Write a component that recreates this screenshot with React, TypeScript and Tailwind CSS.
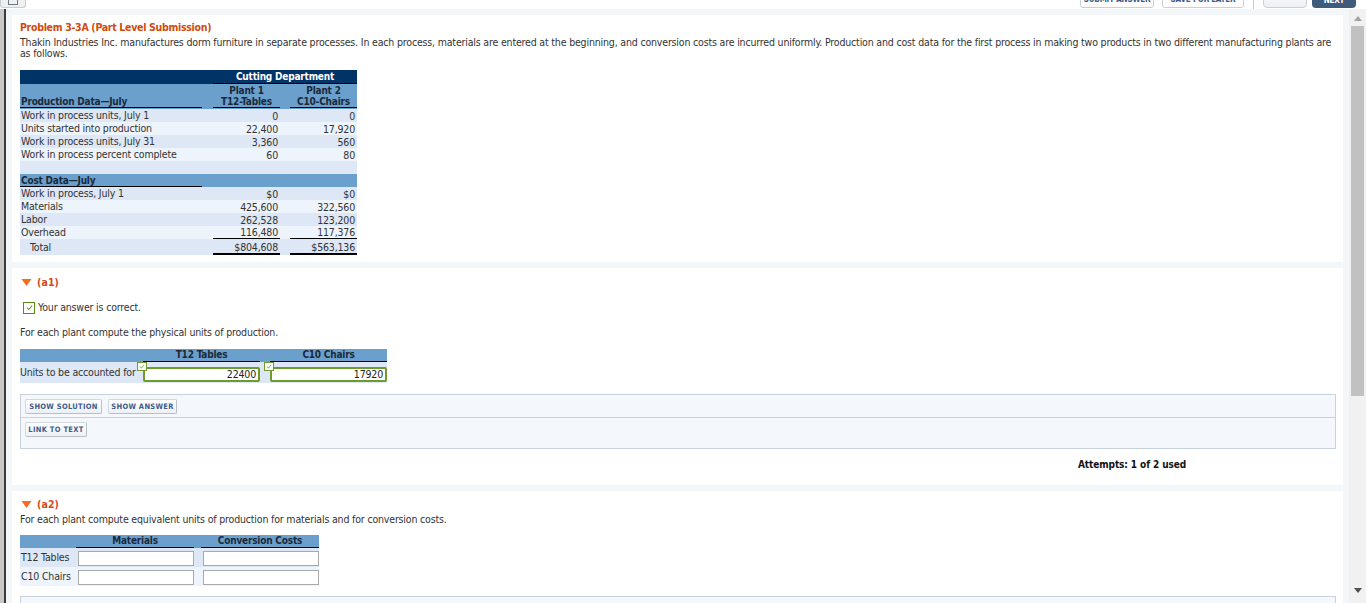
import React from "react";

const FONT = "font-['DejaVu_Sans_Condensed','DejaVu_Sans',sans-serif]";
const ROW_DARK = "bg-[#dde7f5]";
const ROW_LIGHT = "bg-[#eef4fb]";
const HEAD_BLUE = "bg-[#6b9fcc]";
const HEAD_TXT = "font-bold text-[10px] tracking-[-0.2px] text-[#1a2a3a]";

function DataRow({
  label,
  a,
  b,
  bg,
  underline,
}: {
  label: string;
  a: string;
  b: string;
  bg: string;
  underline?: boolean;
}) {
  const line = underline ? "border-b border-black" : "";
  return (
    <div className={`flex h-[13px] items-center ${bg}`}>
      <div className="w-[182px] pl-[1px]">{label}</div>
      <div className={`ml-[11px] w-[67px] pr-[2px] text-right leading-[12px] ${line}`}>{a}</div>
      <div className={`ml-[10px] w-[67px] pr-[2px] text-right leading-[12px] ${line}`}>{b}</div>
    </div>
  );
}

function Check({ className = "" }: { className?: string }) {
  return (
    <svg viewBox="0 0 10 10" className={className}>
      <path d="M2 5.2 L4.2 7.2 L8 2.8" fill="none" stroke="#5f9a1f" strokeWidth="1.2" />
    </svg>
  );
}

function GreenInput({ value }: { value: string }) {
  return (
    <div className="relative w-[117px] h-[15px]">
      <div className="absolute -left-[6px] -top-[5px] w-[10px] h-[9px] border border-[#6f9a2c] bg-white flex items-center justify-center">
        <Check className="w-[8px] h-[7px]" />
      </div>
      <div className="w-full h-full rounded-[2px] border-2 border-[#6f9a2c] bg-white text-right pr-[2px] leading-[11px] text-[#222]">
        {value}
      </div>
    </div>
  );
}

function Btn({ label, w }: { label: string; w: string }) {
  return (
    <div
      className={`${w} h-[15px] flex items-center justify-center rounded-[2px] border border-[#d3d8de] border-r-[#b9c0c8] border-b-[#b9c0c8] bg-gradient-to-b from-white to-[#edf0f3] text-[7.5px] font-bold text-[#3e5b8c] tracking-[0.3px]`}
    >
      {label}
    </div>
  );
}

function SectionHead({ label }: { label: string }) {
  return (
    <div className="flex items-center h-[13px] gap-[5px]">
      <svg viewBox="0 0 10 7" className="w-[11px] h-[7px] ml-[1px]">
        <path d="M0 0 H10 L5 7 Z" fill="#f26c22" />
      </svg>
      <span className="text-[#d2491a] font-bold text-[10.5px] tracking-[0.1px]">{label}</span>
    </div>
  );
}

export default function App() {
  return (
    <div className={`w-[1366px] h-[603px] overflow-hidden bg-white text-[10.5px] tracking-[-0.17px] text-[#333] ${FONT}`}>
      {/* top toolbar, mostly scrolled away */}
      <div className="h-[9px] flex items-end overflow-hidden relative">
        <div className="w-[26px] h-[8px] self-start border border-t-0 border-[#c9cdd2] rounded-b-[3px] bg-[#eef0f2] flex justify-center">
          <div className="w-[10px] h-[5px] border border-t-0 border-[#6a7b8e]" />
        </div>
        <div className="ml-auto flex items-start self-start h-[9px] mr-[10px]">
          <div className="-mt-[15px] w-[74px] h-[23px] border border-[#c8d0d8] rounded-[3px] bg-white flex items-end justify-center pb-[1px] text-[8px] font-bold text-[#3e5b8c]">
            SUBMIT ANSWER
          </div>
          <div className="-mt-[15px] ml-[8px] w-[82px] h-[23px] border border-[#c8d0d8] rounded-[3px] bg-white flex items-end justify-center pb-[1px] text-[8px] font-bold text-[#3e5b8c]">
            SAVE FOR LATER
          </div>
          <div className="ml-[9px] w-[1px] h-[9px] bg-[#c8ccd2]" />
          <div className="-mt-[15px] ml-[9px] w-[44px] h-[23px] border border-[#c8d0d8] rounded-[4px] bg-gradient-to-b from-white to-[#eef0f3]" />
          <div className="-mt-[15px] ml-[5px] w-[44px] h-[23px] rounded-[4px] bg-[#3f5b7c] flex items-end justify-center pb-[1px] text-[8px] font-bold text-white">
            NEXT
          </div>
        </div>
      </div>

      <div className="flex h-[594px]">
        {/* left strip */}
        <div className="w-[4px] bg-[#c8c8c8]" />
        <div className="w-[2px] bg-[#3a3a3a]" />

        {/* main content */}
        <div className="flex-1 bg-[#f4f7fa] px-[6px] pt-[6px] overflow-hidden">
          {/* Panel 1 */}
          <div className="bg-white h-[247px] pl-[8px] pt-[6px]">
            <div className="text-[#cf4a0d] font-bold text-[10.5px] leading-[13px] tracking-[-0.3px]">
              Problem 3-3A (Part Level Submission)
            </div>
            <div className="mt-[3px] leading-[11px]">
              <div className="whitespace-nowrap">
                Thakin Industries Inc. manufactures dorm furniture in separate processes. In each process, materials are entered at the beginning, and conversion costs are incurred uniformly. Production and cost data for the first process in making two products in two different manufacturing plants are
              </div>
              <div>as follows.</div>
            </div>

            {/* production/cost table */}
            <div className="mt-[11px] w-[337px]">
              <div className="flex h-[14px] bg-[#003366]">
                <div className="w-[182px]" />
                <div className="ml-[11px] w-[144px] border-b border-black text-center text-white font-bold text-[10px] tracking-[-0.2px] leading-[13px]">
                  Cutting Department
                </div>
              </div>
              <div className={`flex h-[25px] items-end pb-[1px] ${HEAD_BLUE} ${HEAD_TXT}`}>
                <div className="w-[182px] border-b border-black leading-[11px] pl-[1px]">Production Data—July</div>
                <div className="ml-[11px] w-[67px] border-b border-black text-center leading-[11px]">
                  Plant 1<br />T12-Tables
                </div>
                <div className="ml-[10px] w-[67px] border-b border-black text-center leading-[11px]">
                  Plant 2<br />C10-Chairs
                </div>
              </div>
              <DataRow label="Work in process units, July 1" a="0" b="0" bg={ROW_DARK} />
              <DataRow label="Units started into production" a="22,400" b="17,920" bg={ROW_LIGHT} />
              <DataRow label="Work in process units, July 31" a="3,360" b="560" bg={ROW_DARK} />
              <DataRow label="Work in process percent complete" a="60" b="80" bg={ROW_LIGHT} />
              <div className={`h-[13px] ${ROW_DARK}`} />
              <div className={`flex h-[13px] items-end ${HEAD_BLUE} ${HEAD_TXT}`}>
                <div className="w-[182px] border-b border-black leading-[11px] pl-[1px]">Cost Data—July</div>
              </div>
              <DataRow label="Work in process, July 1" a="$0" b="$0" bg={ROW_DARK} />
              <DataRow label="Materials" a="425,600" b="322,560" bg={ROW_LIGHT} />
              <DataRow label="Labor" a="262,528" b="123,200" bg={ROW_DARK} />
              <DataRow label="Overhead" a="116,480" b="117,376" bg={ROW_LIGHT} underline />
              <div className={`flex h-[16px] items-end ${ROW_DARK}`}>
                <div className="w-[182px] pl-[10px] pb-[2px] leading-[11px]">Total</div>
                <div className="ml-[11px] w-[67px] pr-[2px] text-right border-b-2 border-black leading-[11px]">$804,608</div>
                <div className="ml-[10px] w-[67px] pr-[2px] text-right border-b-2 border-black leading-[11px]">$563,136</div>
              </div>
            </div>
          </div>

          {/* Panel 2 */}
          <div className="bg-white mt-[6px] h-[217px] pl-[8px] pr-[7px] pt-[8px]">
            <SectionHead label="(a1)" />
            <div className="mt-[12px] flex items-center h-[13px]">
              <div className="ml-[3px] w-[12px] h-[12px] border border-[#5c8a1a] flex items-center justify-center">
                <Check className="w-[9px] h-[9px]" />
              </div>
              <span className="ml-[3px]">Your answer is correct.</span>
            </div>
            <div className="mt-[12px] leading-[13px]">For each plant compute the physical units of production.</div>

            <div className="mt-[10px] w-[367px]">
              <div className={`flex h-[13px] ${HEAD_BLUE} ${HEAD_TXT}`}>
                <div className="w-[123px]" />
                <div className="w-[117px] border-b border-black text-center leading-[12px]">T12 Tables</div>
                <div className="ml-[10px] w-[117px] border-b border-black text-center leading-[12px]">C10 Chairs</div>
              </div>
              <div className={`flex h-[21px] ${ROW_DARK}`}>
                <div className="w-[123px] pt-[4px] leading-[13px]">Units to be accounted for</div>
                <div className="pt-[5px]">
                  <GreenInput value="22400" />
                </div>
                <div className="ml-[10px] pt-[5px]">
                  <GreenInput value="17920" />
                </div>
              </div>
            </div>

            <div className="mt-[11px] border border-[#c8d2de] bg-[#f4f7fb] h-[55px]">
              <div className="flex gap-[6px] pl-[4px] pt-[4px] h-[23px] border-b border-[#c8d2de]">
                <Btn label="SHOW SOLUTION" w="w-[77px]" />
                <Btn label="SHOW ANSWER" w="w-[69px]" />
              </div>
              <div className="pl-[4px] pt-[4px]">
                <Btn label="LINK TO TEXT" w="w-[62px]" />
              </div>
            </div>

            <div className="mt-[9px] flex h-[13px]">
              <div className="ml-[1058px] font-bold text-[10px] text-[#111] leading-[13px] tracking-[-0.1px]">Attempts: 1 of 2 used</div>
            </div>
          </div>

          {/* Panel 3 */}
          <div className="bg-white mt-[6px] h-[130px] pl-[8px] pr-[7px] pt-[7px]">
            <SectionHead label="(a2)" />
            <div className="mt-[2px] leading-[13px]">
              For each plant compute equivalent units of production for materials and for conversion costs.
            </div>

            <div className="mt-[9px] w-[299px]">
              <div className={`flex h-[13px] ${HEAD_BLUE} ${HEAD_TXT}`}>
                <div className="w-[56px]" />
                <div className="w-[118px] border-b border-black text-center leading-[12px]">Materials</div>
                <div className="ml-[7px] w-[118px] border-b border-black text-center leading-[12px]">Conversion Costs</div>
              </div>
              {[
                { label: "T12 Tables", bg: ROW_DARK },
                { label: "C10 Chairs", bg: ROW_LIGHT },
              ].map((r) => (
                <div key={r.label} className={`flex h-[19px] items-end pb-[1px] ${r.bg}`}>
                  <div className="w-[56px] self-center pl-[1px] pt-[1px]">{r.label}</div>
                  <div className="ml-[2px] w-[116px] h-[15px] border border-[#a9a9a9] bg-white" />
                  <div className="ml-[9px] w-[116px] h-[15px] border border-[#a9a9a9] bg-white" />
                </div>
              ))}
            </div>

            <div className="mt-[10px] border border-[#c8d2de] bg-[#f4f7fb] h-[40px]" />
          </div>
        </div>

        {/* scrollbar */}
        <div className="w-[17px] bg-[#f1f1f1] flex flex-col items-center">
          <svg viewBox="0 0 8 5" className="mt-[7px] w-[8px] h-[5px]">
            <path d="M0 5 L4 0 L8 5 Z" fill="#a3a3a3" />
          </svg>
          <div className="mt-[5px] w-[13px] h-[370px] bg-[#c1c1c1]" />
          <div className="flex-1" />
          <svg viewBox="0 0 8 5" className="mb-[10px] w-[8px] h-[5px]">
            <path d="M0 0 L8 0 L4 5 Z" fill="#505050" />
          </svg>
        </div>
      </div>
    </div>
  );
}
